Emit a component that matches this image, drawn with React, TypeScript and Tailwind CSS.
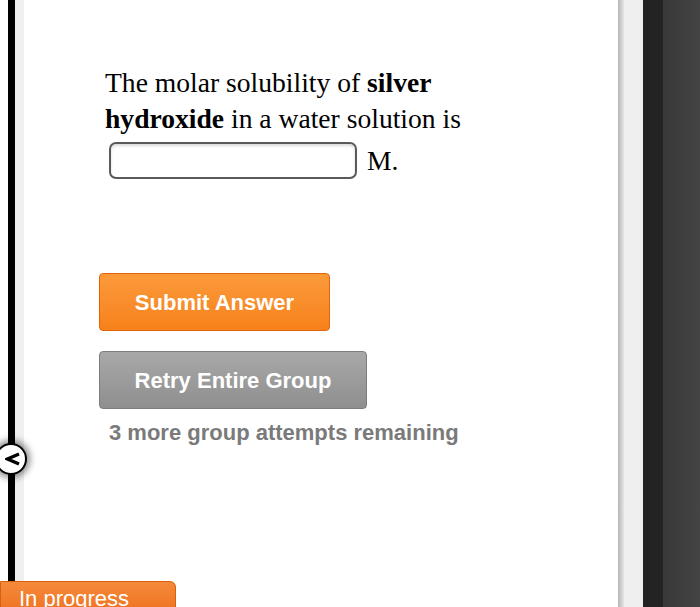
export default function App() {
  return (
    <div className="relative flex h-[607px] w-[700px] overflow-hidden bg-white">
      {/* left rail */}
      <div className="w-[8px] bg-white" />
      <div className="w-[7px] bg-black" />
      <div className="w-[9px] bg-[#f0f0f0]" />

      {/* question area */}
      <div className="flex-1 bg-white pl-[81px] pt-[65px]">
        <div
          className="w-[380px] text-[27.6px] leading-[36px] text-black"
          style={{ fontFamily: '"Liberation Serif", "Times New Roman", serif' }}
        >
          <p>
            The molar solubility of <b>silver</b> <b>hydroxide</b> in a water solution is
          </p>
          <div className="mt-[4px] flex items-center gap-[10px]">
            <input
              type="text"
              className="ml-[4px] h-[37px] w-[248px] rounded-[7px] border-2 border-[#5a5a5a] bg-white shadow-[inset_0_2px_3px_rgba(0,0,0,0.15)] outline-none"
            />
            <span className="mt-[2px]">M.</span>
          </div>
        </div>

        <div
          className="mt-[94px] flex flex-col items-start"
          style={{ fontFamily: '"Liberation Sans", Arial, sans-serif' }}
        >
          <button className="-ml-[6px] h-[58px] w-[231px] rounded-[4px] border border-[#e0640a] bg-gradient-to-b from-[#fb9a3a] to-[#f7811a] text-[22px] font-bold text-white">
            Submit Answer
          </button>
          <button className="-ml-[6px] mt-[20px] h-[58px] w-[268px] rounded-[4px] border border-[#7d7d7d] bg-gradient-to-b from-[#a8a8a8] to-[#8f8f8f] text-[22px] font-bold text-white">
            Retry Entire Group
          </button>
          <p className="ml-[4px] mt-[7px] text-[22px] font-bold text-[#7a7a7a]">
            3 more group attempts remaining
          </p>
        </div>
      </div>

      {/* right edge */}
      <div className="w-[6px] bg-gradient-to-r from-[#b5b5b5] to-[#e6e6e6]" />
      <div className="w-[19px] bg-[#efefef]" />
      <div className="w-[20px] bg-[#232323]" />
      <div className="w-[37px] bg-gradient-to-r from-[#383838] to-[#444444]" />

      {/* collapse handle */}
      <div className="absolute left-[-5px] top-[443px] flex h-[32px] w-[32px] items-center justify-center rounded-full border-2 border-black bg-white shadow-[0_0_7px_3px_rgba(0,0,0,0.45)]">
        <svg width="16" height="16" viewBox="0 0 16 16" className="ml-[4px]">
          <path d="M14 3 L2.5 8 L14 13" fill="none" stroke="black" strokeWidth="3.2" strokeLinejoin="miter" />
        </svg>
      </div>

      {/* status tab */}
      <div
        className="absolute bottom-[-10px] left-0 h-[36px] w-[176px] rounded-tr-[6px] border border-[#d9600f] bg-gradient-to-b from-[#f58a3a] to-[#ee6f1a] pl-[18px] pt-[3px] text-[22px] leading-[28px] text-white"
        style={{ fontFamily: '"Liberation Sans", Arial, sans-serif' }}
      >
        In progress
      </div>
    </div>
  );
}
